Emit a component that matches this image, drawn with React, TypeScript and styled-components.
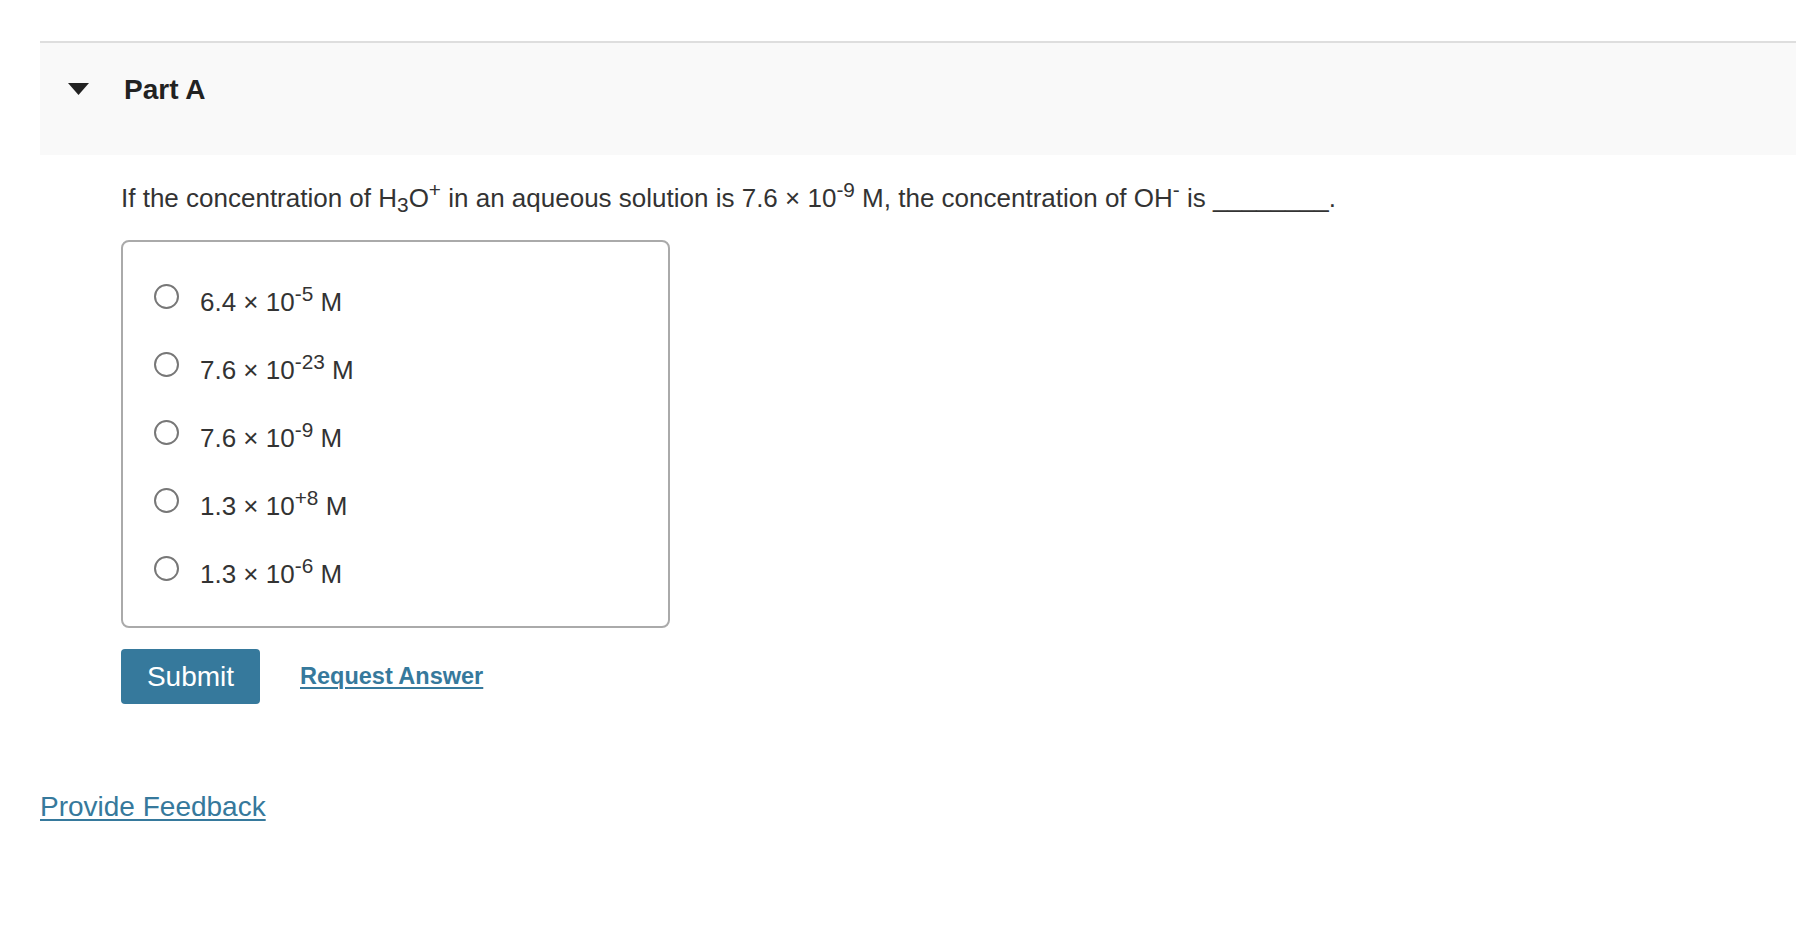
import React, { useState } from 'react';
import styled, { createGlobalStyle } from 'styled-components';

const GlobalStyle = createGlobalStyle`
  html, body {
    margin: 0;
    padding: 0;
    background: #fff;
  }
  body {
    font-family: "Liberation Sans", Arial, Helvetica, sans-serif;
    color: #333;
  }
`;

const options = [
  { id: 'a', base: '6.4 × 10', exp: '-5' },
  { id: 'b', base: '7.6 × 10', exp: '-23' },
  { id: 'c', base: '7.6 × 10', exp: '-9' },
  { id: 'd', base: '1.3 × 10', exp: '+8' },
  { id: 'e', base: '1.3 × 10', exp: '-6' },
];

function App() {
  const [picked, setPicked] = useState<string | null>(null);

  return (
    <Page>
      <GlobalStyle />
      <PartHeader>
        <Caret viewBox="0 0 21 12">
          <path d="M0 0 H21 L10.5 12 Z" fill="#222" />
        </Caret>
        <PartTitle>Part A</PartTitle>
      </PartHeader>

      <PartBody>
        <Question>
          If the concentration of H<Sub>3</Sub>O<Sup>+</Sup> in an aqueous solution is 7.6 × 10
          <Sup>-9</Sup> M, the concentration of OH<Sup>-</Sup> is <Blank>________</Blank>.
        </Question>

        <ChoiceBox>
          {options.map(o => (
            <ChoiceRow key={o.id} onClick={() => setPicked(o.id)}>
              <Radio checked={picked === o.id} />
              <ChoiceLabel>
                {o.base}
                <Sup>{o.exp}</Sup> M
              </ChoiceLabel>
            </ChoiceRow>
          ))}
        </ChoiceBox>

        <Actions>
          <SubmitBtn>Submit</SubmitBtn>
          <RequestLink href="#">Request Answer</RequestLink>
        </Actions>
      </PartBody>

      <FeedbackLink href="#">Provide Feedback</FeedbackLink>
    </Page>
  );
}

export default App;

const Page = styled.div`
  padding: 41px 0 0 40px;
  min-height: 950px;
  box-sizing: border-box;
`;

const PartHeader = styled.div`
  display: flex;
  align-items: flex-start;
  height: 114px;
  box-sizing: border-box;
  border-top: 2px solid #dedede;
  background: #f9f9f9;
  padding: 31px 0 0 28px;
`;

const Caret = styled.svg`
  width: 21px;
  height: 12px;
  margin-top: 9px;
  margin-right: 35px;
`;

const PartTitle = styled.h2`
  margin: 0;
  font-size: 28px;
  line-height: 32px;
  font-weight: 700;
  color: #222;
`;

const PartBody = styled.div`
  padding-left: 81px;
`;

const Question = styled.p`
  margin: 27px 0 0;
  font-size: 26px;
  line-height: 32px;
  color: #333;
`;

const Sup = styled.sup`
  font-size: 0.8em;
  line-height: 0;
  vertical-align: 0.5em;
`;

const Sub = styled.sub`
  font-size: 0.8em;
  line-height: 0;
  vertical-align: -0.25em;
`;

const Blank = styled.span`
  letter-spacing: 0;
`;

const ChoiceBox = styled.div`
  margin-top: 26px;
  width: 549px;
  height: 388px;
  box-sizing: border-box;
  border: 2px solid #aaa;
  border-radius: 8px;
  padding: 20px 0 0 31px;
`;

const ChoiceRow = styled.label`
  display: flex;
  align-items: center;
  height: 68px;
  cursor: pointer;
`;

const Radio = styled.span<{ checked: boolean }>`
  width: 25px;
  height: 25px;
  box-sizing: border-box;
  border-radius: 50%;
  border: 2px solid #777;
  background: ${p => (p.checked ? 'radial-gradient(circle, #357a9c 0 5px, #fff 6px)' : '#fff')};
  flex-shrink: 0;
`;

const ChoiceLabel = styled.span`
  margin-left: 21px;
  padding-top: 12px;
  font-size: 26px;
  line-height: 28px;
  color: #333;
`;

const Actions = styled.div`
  display: flex;
  align-items: center;
  margin-top: 21px;
  gap: 40px;
`;

const SubmitBtn = styled.button`
  width: 139px;
  height: 55px;
  border: none;
  border-radius: 4px;
  background: #36799c;
  color: #fff;
  font-family: "Liberation Sans", Arial, sans-serif;
  font-size: 28px;
  padding: 0;
  cursor: pointer;
`;

const RequestLink = styled.a`
  font-size: 23.5px;
  font-weight: 700;
  color: #36799c;
  text-decoration: underline;
  text-underline-offset: 3px;
  text-decoration-thickness: 2px;
`;

const FeedbackLink = styled.a`
  display: inline-block;
  margin-top: 87px;
  font-size: 28px;
  line-height: 32px;
  color: #36799c;
  text-decoration: underline;
  text-underline-offset: 3px;
  text-decoration-thickness: 2px;
`;
